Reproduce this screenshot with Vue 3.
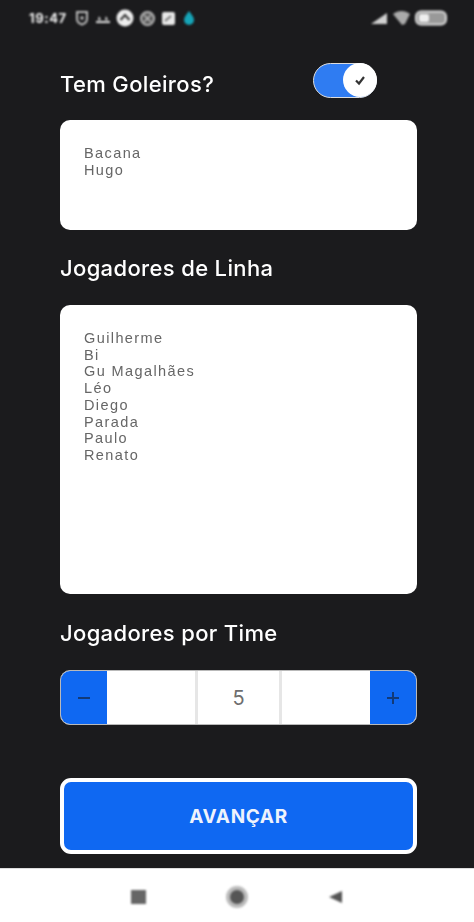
<script setup>
const goalkeepers = ['Bacana', 'Hugo']
const players = ['Guilherme', 'Bi', 'Gu Magalhães', 'Léo', 'Diego', 'Parada', 'Paulo', 'Renato']
</script>

<template>
  <div class="screen">
    <header class="status">
      <div class="status-left">
        <span class="time">19:47</span>
        <svg width="16" height="16" viewBox="0 0 16 16"><path d="M3 2h10v7c0 3-2 4.500-5 5.500C5 13.500 3 12 3 9z" fill="none" stroke="#bbb" stroke-width="2"/><circle cx="8" cy="8" r="1.800" fill="#bbb"/></svg>
        <svg width="16" height="16" viewBox="0 0 16 16"><path d="M1 11h14v2H1zM4 6l2 4H3zM11 6l2 4h-3z" fill="#e4e4e4"/></svg>
        <svg width="18" height="18" viewBox="0 0 18 18"><circle cx="9" cy="9" r="8.500" fill="#eee"/><path d="M4.500 11 9 6l4.500 5" fill="none" stroke="#333" stroke-width="2"/></svg>
        <svg width="17" height="17" viewBox="0 0 17 17"><circle cx="8.500" cy="8.500" r="6.500" fill="#555" stroke="#bbb" stroke-width="2"/><path d="M5 5l7 7M12 5l-7 7" stroke="#bbb" stroke-width="1.500"/></svg>
        <svg width="15" height="15" viewBox="0 0 15 15"><rect x="1" y="1" width="13" height="13" rx="2" fill="#e8e8e8"/><path d="M4 10l6-5" stroke="#777" stroke-width="2"/></svg>
        <svg class="drop" width="12" height="16" viewBox="0 0 12 16"><path d="M6 1c3 4 5 6 5 9a5 5 0 0 1-10 0c0-3 2-5 5-9z" fill="#16a5b8"/></svg>
      </div>
      <div class="status-right">
        <svg width="18" height="13" viewBox="0 0 18 13"><path d="M1 12 17 1v11z" fill="#d0d0d0"/></svg>
        <svg width="19" height="16" viewBox="0 0 19 16"><path d="M1 4c5-4 12-4 17 0l-5 10-3 1z" fill="#aaa"/></svg>
        <svg width="33" height="16" viewBox="0 0 33 16"><rect x="1" y="1.500" width="30" height="13" rx="5" fill="#999" stroke="#ddd" stroke-width="2"/><rect x="4" y="4" width="10" height="8" rx="2" fill="#eee"/></svg>
      </div>
    </header>

    <main class="content">
      <div class="keeper-row">
        <h2 class="label">Tem Goleiros?</h2>
        <div class="toggle">
          <span class="knob">
            <svg width="14" height="12" viewBox="0 0 14 12"><path d="M3 6.500 6 9.500 11 3" fill="none" stroke="#333" stroke-width="2.200"/></svg>
          </span>
        </div>
      </div>

      <div class="card card-small">
        <div v-for="name in goalkeepers" :key="name">{{ name }}</div>
      </div>

      <h2 class="label label-players">Jogadores de Linha</h2>

      <div class="card card-large">
        <div v-for="name in players" :key="name">{{ name }}</div>
      </div>

      <h2 class="label label-team">Jogadores por Time</h2>

      <div class="stepper">
        <button class="step">
          <svg width="14" height="14" viewBox="0 0 14 14"><path d="M1 7h12" stroke="#123a78" stroke-width="2"/></svg>
        </button>
        <div class="cell"></div>
        <div class="cell cell-value">5</div>
        <div class="cell"></div>
        <button class="step">
          <svg width="14" height="14" viewBox="0 0 14 14"><path d="M1 7h12M7 1v12" stroke="#123a78" stroke-width="2"/></svg>
        </button>
      </div>

      <button class="advance">AVANÇAR</button>
    </main>

    <nav class="navbar">
      <span class="nav-square"></span>
      <span class="nav-circle"></span>
      <svg class="nav-back" width="15" height="16" viewBox="0 0 15 16"><path d="M1 8 14 2v12z" fill="#555"/></svg>
    </nav>
  </div>
</template>

<style scoped>
.screen {
  width: 474px;
  height: 922px;
  background: #1b1b1d;
  display: flex;
  flex-direction: column;
  font-family: Inter, "Liberation Sans", sans-serif;
  overflow: hidden;
}
.status {
  height: 38px;
  flex: none;
  padding: 0 26px 2px 29px;
  box-sizing: border-box;
  display: flex;
  align-items: center;
  justify-content: space-between;
  filter: blur(0.8px);
}
.status-left, .status-right {
  display: flex;
  align-items: center;
  gap: 5px;
}
.time {
  font-size: 13px;
  font-weight: 700;
  letter-spacing: 0.6px;
  color: #f2f2f2;
  margin-right: 2px;
}
.drop { margin-left: 2px; }
.status-right { gap: 4px; }
.content {
  flex: 1;
  padding: 25px 57px 0 60px;
  display: flex;
  flex-direction: column;
}
.keeper-row {
  height: 35px;
  display: flex;
  align-items: center;
  justify-content: space-between;
  padding-right: 40px;
}
.label {
  margin: 0;
  font-size: 22px;
  font-weight: 500;
  line-height: 26px;
  letter-spacing: 0.350px;
  color: #fff;
  filter: blur(0.5px);
}
.keeper-row .label { margin-top: 7px; }
.toggle {
  width: 64px;
  height: 35px;
  box-sizing: border-box;
  border-radius: 18px;
  background: #2f7cf2;
  border: 1.500px solid #ddd;
  display: flex;
  justify-content: flex-end;
  filter: blur(0.7px);
}
.knob {
  width: 34px;
  height: 34px;
  margin: -1px;
  border-radius: 50%;
  background: #fff;
  display: flex;
  align-items: center;
  justify-content: center;
}
.card {
  box-sizing: border-box;
  background: #fff;
  border-radius: 10px;
  padding: 25px 24px;
  font-family: "Liberation Sans", Arial, sans-serif;
  font-size: 14.500px;
  line-height: 16.700px;
  letter-spacing: 1.400px;
  color: #666;
}
.card > div { filter: blur(0.7px); }
.card-small {
  height: 110px;
  margin-top: 22px;
}
.card-large {
  height: 289px;
  margin-top: 24px;
}
.label-players { margin-top: 25px; }
.label-team { margin-top: 26px; }
.stepper {
  margin-top: 24px;
  height: 55px;
  display: flex;
  border-radius: 10px;
  overflow: hidden;
  background: #fff;
  border: 1.500px solid #b9b9b9;
  box-sizing: border-box;
}
.step {
  width: 46px;
  flex: none;
  border: 0;
  padding: 0;
  background: #0f68f2;
  display: flex;
  align-items: center;
  justify-content: center;
}
.cell {
  flex: 1;
  display: flex;
  align-items: center;
  justify-content: center;
}
.cell-value {
  flex: none;
  width: 87px;
  border-left: 3px solid #e6e6e6;
  border-right: 3px solid #e6e6e6;
  box-sizing: border-box;
  font-size: 20px;
  color: #6e6e6e;
}
.advance {
  margin-top: 53px;
  height: 76px;
  border: 4px solid #fff;
  border-radius: 11px;
  background: #0f68f2;
  color: #eef3fc;
  font-family: inherit;
  font-size: 19px;
  font-weight: 700;
  letter-spacing: 0.6px;
  padding: 0;
}
.navbar {
  height: 54px;
  flex: none;
  background: #fff;
  border-top: 1px solid #ddd;
  box-sizing: border-box;
  display: flex;
  align-items: center;
  justify-content: center;
  gap: 80px;
  padding-top: 3px;
}
.nav-square {
  width: 15px;
  height: 14px;
  background: #666;
  filter: blur(0.8px);
}
.nav-circle {
  width: 14px;
  height: 14px;
  border-radius: 50%;
  background: #555;
  border: 4px solid #bbb;
  filter: blur(0.8px);
}
.nav-back { filter: blur(0.8px); }
</style>
